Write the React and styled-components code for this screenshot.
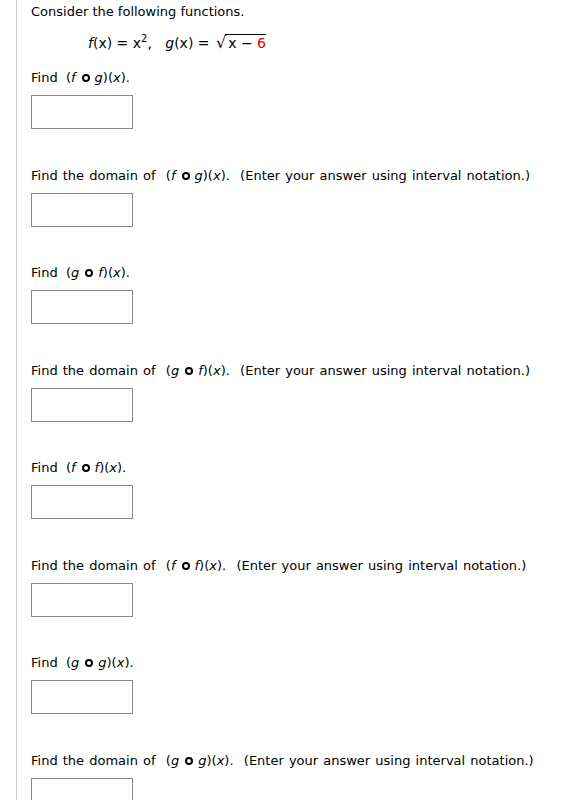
import React from "react";
import styled, { createGlobalStyle } from "styled-components";

const Global = createGlobalStyle`
  html, body { margin: 0; padding: 0; background: #fff; }
  body { font-family: Verdana, "DejaVu Sans", sans-serif; font-size: 13px; color: #000; }
`;

const Page = styled.div`
  margin-left: 16px;
  border-left: 1px solid #d0d0d0;
  padding: 4px 0 40px 14px;
  min-height: 800px;
  box-sizing: border-box;
`;

const Line = styled.div`
  line-height: 16px;
  white-space: nowrap;
  word-spacing: ${(p) => (p.$wide ? "1px" : "0")};
`;

const Formula = styled.div`
  line-height: 16px;
  margin-top: 14px;
  padding-left: 57px;
  font-size: 14px;
  white-space: nowrap;
  display: flex;
  align-items: flex-end;
`;

const I = styled.i`
  font-style: italic;
`;

const Sup = styled.sup`
  font-size: 10px;
  vertical-align: 6px;
  line-height: 0;
`;

const Red = styled.span`
  color: #e00000;
`;

const Radical = styled.span`
  display: inline-flex;
  align-items: flex-end;
  margin-left: 2px;
`;

const RootSign = styled.span`
  font-size: 16px;
  line-height: 16px;
  margin-right: -1px;
`;

const Radicand = styled.span`
  border-top: 1px solid #000;
  padding: 1px 0 0 3px;
  line-height: 15px;
`;

const Question = styled.section`
  margin-top: ${(p) => p.$top}px;
`;

const Box = styled.div`
  margin-top: 9px;
  width: 100px;
  height: 32px;
  border: 1px solid #888;
  background: #fff;
`;

const Op = styled.span`
  display: inline-block;
  width: 8px;
  height: 8px;
  border: 2px solid #000;
  border-radius: 50%;
  box-sizing: border-box;
  margin: 0 5px 1px 6px;
  vertical-align: middle;
`;

const Comp = ({ a, b }) => (
  <>
    (<I>{a}</I>
    <Op />
    <I>{b}</I>)(<I>x</I>)
  </>
);

const questions = [
  ["f", "g"],
  ["g", "f"],
  ["f", "f"],
  ["g", "g"],
];

export default function App() {
  return (
    <>
      <Global />
      <Page>
        <Line>Consider the following functions.</Line>
        <Formula>
          <span>
            <I>f</I>(x) = x<Sup>2</Sup>,&nbsp;&nbsp;&nbsp;<I>g</I>(x) =&nbsp;
          </span>
          <Radical>
            <RootSign>√</RootSign>
            <Radicand>
              x − <Red>6</Red>
            </Radicand>
          </Radical>
        </Formula>
        {questions.map(([a, b], i) => (
          <React.Fragment key={i}>
            <Question $top={i === 0 ? 19 : 38}>
              <Line>
                Find&nbsp;&nbsp;<Comp a={a} b={b} />.
              </Line>
              <Box />
            </Question>
            <Question $top={39}>
              <Line $wide>
                Find the domain of&nbsp;&nbsp;<Comp a={a} b={b} />.&nbsp;&nbsp;(Enter your answer using interval notation.)
              </Line>
              <Box />
            </Question>
          </React.Fragment>
        ))}
      </Page>
    </>
  );
}
